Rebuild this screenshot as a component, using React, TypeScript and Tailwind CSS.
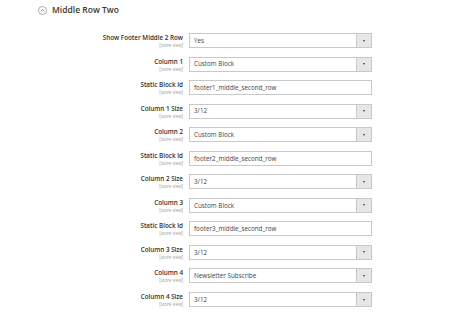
import React from "react";

type Field = {
  label: string;
  value: string;
  kind: "select" | "text";
};

const fields: Field[] = [
  { label: "Show Footer Middle 2 Row", value: "Yes", kind: "select" },
  { label: "Column 1", value: "Custom Block", kind: "select" },
  { label: "Static Block Id", value: "footer1_middle_second_row", kind: "text" },
  { label: "Column 1 Size", value: "3/12", kind: "select" },
  { label: "Column 2", value: "Custom Block", kind: "select" },
  { label: "Static Block Id", value: "footer2_middle_second_row", kind: "text" },
  { label: "Column 2 Size", value: "3/12", kind: "select" },
  { label: "Column 3", value: "Custom Block", kind: "select" },
  { label: "Static Block Id", value: "footer3_middle_second_row", kind: "text" },
  { label: "Column 3 Size", value: "3/12", kind: "select" },
  { label: "Column 4", value: "Newsletter Subscribe", kind: "select" },
  { label: "Column 4 Size", value: "3/12", kind: "select" },
];

// One config row: label on the left, field on the right
const FieldRow = ({ field }: { field: Field }) => (
  <div className="flex h-[15px] gap-[6px]">
    <div className="flex w-[183px] flex-col items-end pt-[1px]">
      <span className="text-[6.3px] leading-[8px] font-semibold text-[#303030] whitespace-nowrap">
        {field.label}
      </span>
      <span className="text-[4.4px] leading-[6px] text-[#9a9a9a] whitespace-nowrap">
        [store view]
      </span>
    </div>
    <div className="flex h-[15px] w-[183px] border border-[#c8c8c8] bg-white">
      <div className="flex flex-1 items-center pl-[4px] text-[6.3px] text-[#444] whitespace-nowrap">
        {field.value}
      </div>
      {field.kind === "select" && (
        <div className="flex w-[15px] items-center justify-center border-l border-[#c8c8c8] bg-[#e6e6e6]">
          <div className="h-0 w-0 border-x-[1.8px] border-t-[2.2px] border-x-transparent border-t-[#333]" />
        </div>
      )}
    </div>
  </div>
);

const App = () => (
  <div
    className="h-[314px] w-[474px] overflow-hidden bg-white"
    style={{ fontFamily: '"Open Sans", "Liberation Sans", sans-serif' }}
  >
    {/* Section header */}
    <div className="flex items-center gap-[5px] pl-[38px] pt-[5px]">
      <svg width="9" height="9" viewBox="0 0 18 18" fill="none">
        <circle cx="9" cy="9" r="8" stroke="#8a8a8a" strokeWidth="1.4" />
        <path d="M5.5 10.5 L9 7 L12.5 10.5" stroke="#6b6b6b" strokeWidth="1.6" fill="none" />
      </svg>
      <span className="text-[8.5px] leading-[10px] font-semibold text-[#41362f]">
        Middle Row Two
      </span>
    </div>

    {/* Fields */}
    <div className="mt-[18px] flex flex-col gap-[8.55px]">
      {fields.map((field, i) => (
        <FieldRow key={i} field={field} />
      ))}
    </div>
  </div>
);

export default App;
